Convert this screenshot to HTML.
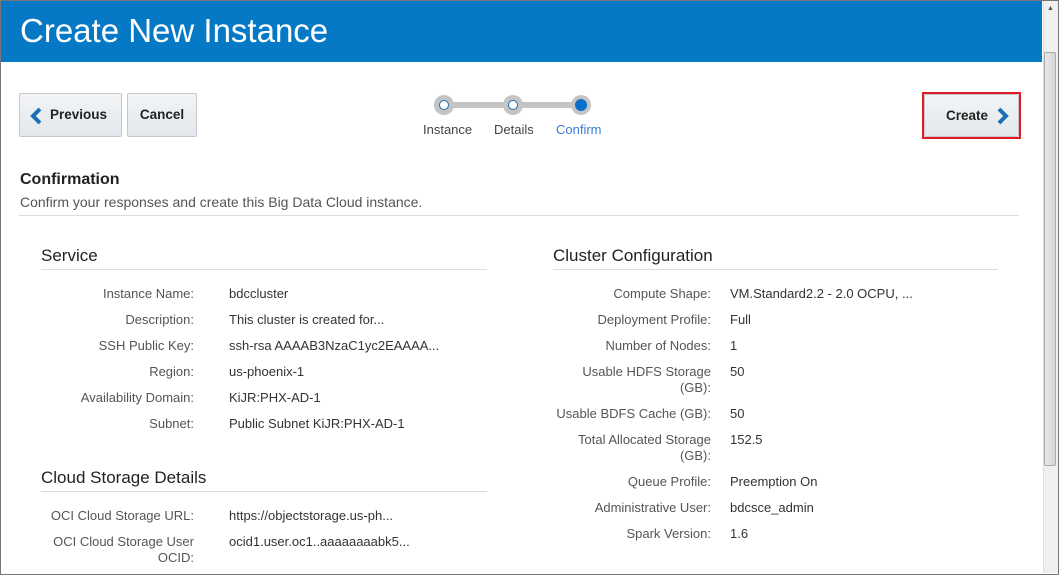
<!DOCTYPE html>
<html><head><style>
body{margin:0;width:1059px;height:575px;overflow:hidden;background:#fff;font-family:"Liberation Sans",Arial,sans-serif;position:relative}
.frame{position:absolute;left:0;top:0;width:1057px;height:573px;border:1px solid #777;}
.hdr{position:absolute;left:1px;top:1px;width:1041px;height:61px;background:#0679c6}
.hdr h1{margin:0;position:absolute;left:19px;top:11px;font-weight:normal;color:#fff;font-size:33px}
.sb{position:absolute;left:1043px;top:1px;width:14px;height:572px;background:#f0f0f0;border-left:1px solid #ddd}
.thumb{position:absolute;left:1044px;top:52px;width:12px;height:414px;background:linear-gradient(90deg,#e8e8e8,#d6d6d6);border:1px solid #aaa;box-sizing:border-box;border-radius:2px}
.btn{position:absolute;background:linear-gradient(#f2f4f6,#e4e8ec);border:1px solid #c4c8cc;border-radius:2px;font-size:13.5px;font-weight:bold;color:#222;box-sizing:border-box;line-height:42px}
.t{position:absolute;font-size:13px;color:#333;white-space:nowrap}
.l{text-align:right;color:#555}
.sec{position:absolute;font-size:17px;color:#222}
.hr{position:absolute;height:1px;background:#d8dde2}
</style></head><body>
<div class="frame"></div>
<div class="hdr"><h1>Create New Instance</h1></div>
<div class="sb"></div><div class="thumb"></div>
<div style="position:absolute;left:1047px;top:5px;font-size:7px;color:#555">▲</div>
<div class="btn" style="left:19px;top:93px;width:103px;height:44px;padding-left:30px"><svg style="position:absolute;left:10px;top:13px" width="14" height="18"><path d="M10 2 L3 9 L10 16" stroke="#1f6fb5" stroke-width="4" fill="none"/></svg>Previous</div>
<div class="btn" style="left:127px;top:93px;width:70px;height:44px;text-align:center">Cancel</div>
<div style="position:absolute;left:922px;top:92px;width:99px;height:47px;border:2px solid #e21b22;box-sizing:border-box"></div>
<div class="btn" style="left:924px;top:94px;width:95px;height:43px;padding-left:21px">Create<svg style="position:absolute;left:70px;top:12px" width="14" height="18"><path d="M4 2 L11 9 L4 16" stroke="#1f6fb5" stroke-width="4" fill="none"/></svg></div>
<div style="position:absolute;left:443px;top:102px;width:140px;height:6px;background:#c4c4c4"></div>
<div style="position:absolute;left:434px;top:95px;width:20px;height:20px;border-radius:50%;background:#c4c4c4"></div>
<div style="position:absolute;left:439px;top:100px;width:10px;height:10px;border-radius:50%;background:#fff;border:1px solid #1f6fb5;box-sizing:border-box"></div>
<div style="position:absolute;left:503px;top:95px;width:20px;height:20px;border-radius:50%;background:#c4c4c4"></div>
<div style="position:absolute;left:508px;top:100px;width:10px;height:10px;border-radius:50%;background:#fff;border:1px solid #1f6fb5;box-sizing:border-box"></div>
<div style="position:absolute;left:571px;top:95px;width:20px;height:20px;border-radius:50%;background:#c4c4c4"></div>
<div style="position:absolute;left:575px;top:99px;width:12px;height:12px;border-radius:50%;background:#0a6fc9"></div>
<div class="t" style="left:423px;top:122px;color:#444">Instance</div>
<div class="t" style="left:494px;top:122px;color:#444">Details</div>
<div class="t" style="left:556px;top:122px;color:#3a7bd5">Confirm</div>
<div class="t" style="left:20px;top:171px;font-size:16px;font-weight:bold;color:#222">Confirmation</div>
<div class="t" style="left:20px;top:194px;font-size:14px;color:#555">Confirm your responses and create this Big Data Cloud instance.</div>
<div class="hr" style="left:19px;top:215px;width:1000px"></div>
<div class="sec" style="left:41px;top:246px">Service</div>
<div class="hr" style="left:41px;top:269px;width:446px"></div>
<div class="sec" style="left:553px;top:246px">Cluster Configuration</div>
<div class="hr" style="left:553px;top:269px;width:445px"></div>
<div class="sec" style="left:41px;top:468px">Cloud Storage Details</div>
<div class="hr" style="left:41px;top:491px;width:446px"></div>
<div class="t l" style="right:865px;top:286px">Instance Name:</div><div class="t" style="left:229px;top:286px">bdccluster</div>
<div class="t l" style="right:865px;top:312px">Description:</div><div class="t" style="left:229px;top:312px">This cluster is created for...</div>
<div class="t l" style="right:865px;top:338px">SSH Public Key:</div><div class="t" style="left:229px;top:338px">ssh-rsa AAAAB3NzaC1yc2EAAAA...</div>
<div class="t l" style="right:865px;top:364px">Region:</div><div class="t" style="left:229px;top:364px">us-phoenix-1</div>
<div class="t l" style="right:865px;top:390px">Availability Domain:</div><div class="t" style="left:229px;top:390px">KiJR:PHX-AD-1</div>
<div class="t l" style="right:865px;top:416px">Subnet:</div><div class="t" style="left:229px;top:416px">Public Subnet KiJR:PHX-AD-1</div>
<div class="t l" style="right:865px;top:508px">OCI Cloud Storage URL:</div><div class="t" style="left:229px;top:508px">https://objectstorage.us-ph...</div>
<div class="t l" style="right:865px;top:534px;line-height:16px">OCI Cloud Storage User<br>OCID:</div><div class="t" style="left:229px;top:534px">ocid1.user.oc1..aaaaaaaabk5...</div>
<div class="t l" style="right:348px;top:286px">Compute Shape:</div><div class="t" style="left:730px;top:286px">VM.Standard2.2 - 2.0 OCPU, ...</div>
<div class="t l" style="right:348px;top:312px">Deployment Profile:</div><div class="t" style="left:730px;top:312px">Full</div>
<div class="t l" style="right:348px;top:338px">Number of Nodes:</div><div class="t" style="left:730px;top:338px">1</div>
<div class="t l" style="right:348px;top:364px;line-height:16px">Usable HDFS Storage<br>(GB):</div><div class="t" style="left:730px;top:364px">50</div>
<div class="t l" style="right:348px;top:406px">Usable BDFS Cache (GB):</div><div class="t" style="left:730px;top:406px">50</div>
<div class="t l" style="right:348px;top:432px;line-height:16px">Total Allocated Storage<br>(GB):</div><div class="t" style="left:730px;top:432px">152.5</div>
<div class="t l" style="right:348px;top:474px">Queue Profile:</div><div class="t" style="left:730px;top:474px">Preemption On</div>
<div class="t l" style="right:348px;top:500px">Administrative User:</div><div class="t" style="left:730px;top:500px">bdcsce_admin</div>
<div class="t l" style="right:348px;top:526px">Spark Version:</div><div class="t" style="left:730px;top:526px">1.6</div>
</body></html>
